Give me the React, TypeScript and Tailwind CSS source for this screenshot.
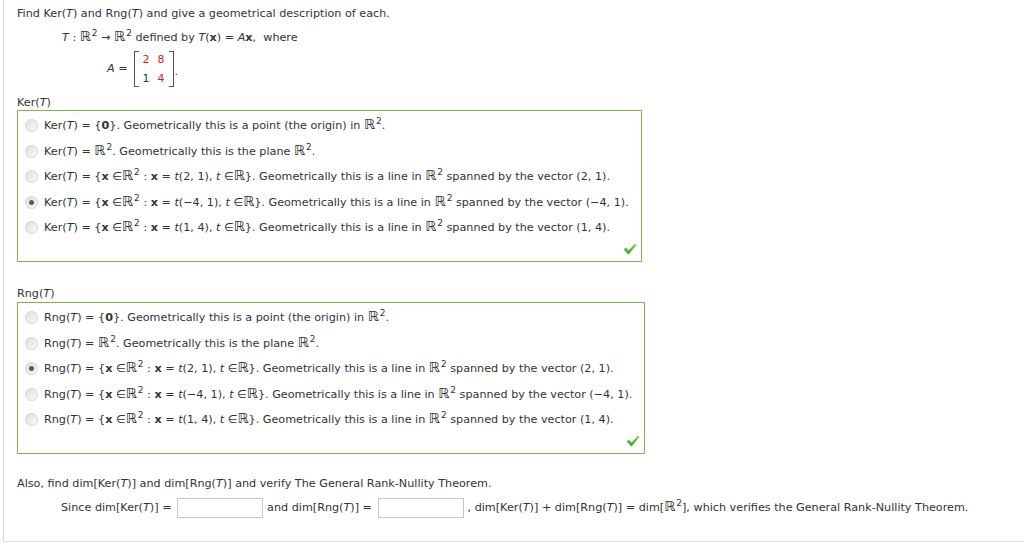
import React from "react";

const R = () => <span className="text-[14px] leading-[0px]">ℝ</span>;
const Sup = ({ c }: { c: string }) => <span className="text-[9px] leading-[0px] relative -top-[5px] ml-[1px]">{c}</span>;
const I = ({ c }: { c: string }) => <i>{c}</i>;

function Radio({ checked }: { checked?: boolean }) {
  return (
    <span className="inline-flex w-[13px] h-[13px] rounded-full border border-[#d4d4d4] bg-gradient-to-br from-[#dedede] to-[#fafafa] items-center justify-center shrink-0">
      {checked && <span className="w-[5px] h-[5px] rounded-full bg-[#5a5a5a]" />}
    </span>
  );
}

function Check() {
  return (
    <svg width="14" height="12" viewBox="0 0 14 12">
      <defs>
        <linearGradient id="g" x1="0" y1="0" x2="0" y2="1">
          <stop offset="0" stopColor="#8fd16a" />
          <stop offset="1" stopColor="#3f9a2b" />
        </linearGradient>
      </defs>
      <path d="M0.5 6.5 L3 4.5 L5.5 7.5 L12 0.5 L13.5 2 L5.5 11.5 Z" fill="url(#g)" />
    </svg>
  );
}

function Row({ checked, children }: { checked?: boolean; children: React.ReactNode }) {
  return (
    <div className="flex items-center h-[25.5px]">
      <Radio checked={checked} />
      <div className="ml-[6px] whitespace-nowrap">{children}</div>
    </div>
  );
}

function Block({ name, sel, width }: { name: string; sel: number; width: string }) {
  const F = (
    <>
      {name}(<I c="T" />)
    </>
  );
  const setLine = (vec: string) => (
    <>
      {F} = {"{"}
      <b>x</b> ∈<R />
      <Sup c="2" /> : <b>x</b> = <I c="t" />({vec}), <I c="t" /> ∈<R />
      {"}"}. Geometrically this is a line in <R />
      <Sup c="2" /> spanned by the vector ({vec}).
    </>
  );
  const rows = [
    <>
      {F} = {"{"}
      <b>0</b>
      {"}"}. Geometrically this is a point (the origin) in <R />
      <Sup c="2" />.
    </>,
    <>
      {F} = <R />
      <Sup c="2" />. Geometrically this is the plane <R />
      <Sup c="2" />.
    </>,
    setLine("2, 1"),
    setLine("−4, 1"),
    setLine("1, 4"),
  ];
  return (
    <div className={`border border-[#7db54f] ${width} pl-[7px] pt-[2px] h-[152px] relative`}>
      {rows.map((r, i) => (
        <Row key={i} checked={i === sel}>
          {r}
        </Row>
      ))}
      <div className="absolute right-[4px] bottom-[6px]">
        <Check />
      </div>
    </div>
  );
}

export default function App() {
  return (
    <div className="w-[1024px] h-[544px] bg-white font-['DejaVu_Sans',Verdana,sans-serif] text-[11.2px] text-[#333] leading-none">
      <div className="ml-[3px] h-[542px] border-l border-b border-[#dcdcdc] pl-[13px] pt-[8px]">
        <div className="h-[11px]">
          Find Ker(<I c="T" />) and Rng(<I c="T" />) and give a geometrical description of each.
        </div>
        <div className="ml-[45px] mt-[13px] h-[11px]">
          <I c="T" /> : <R />
          <Sup c="2" /> → <R />
          <Sup c="2" /> defined by <I c="T" />(<b>x</b>) = <I c="A" />
          <b>x</b>, &nbsp;where
        </div>
        <div className="ml-[90px] mt-[8px] flex items-center h-[36px]">
          <span>
            <I c="A" /> =
          </span>
          <div className="ml-[6px] flex items-stretch h-[36px]">
            <div className="w-[5px] border-l border-t border-b border-[#555]" />
            <div className="grid grid-cols-2 gap-x-[8px] content-between py-[3px] px-[4px] text-[11px]">
              <span className="text-[#e02020]">2</span>
              <span className="text-[#e02020]">8</span>
              <span>1</span>
              <span className="text-[#e02020]">4</span>
            </div>
            <div className="w-[5px] border-r border-t border-b border-[#555]" />
          </div>
          <span className="self-end mb-[10px] ml-[1px]">.</span>
        </div>
        <div className="mt-[10px] h-[11px]">
          Ker(<I c="T" />)
        </div>
        <div className="mt-[2px]">
          <Block name="Ker" sel={3} width="w-[625px]" />
        </div>
        <div className="mt-[26px] h-[11px]">
          Rng(<I c="T" />)
        </div>
        <div className="mt-[3px]">
          <Block name="Rng" sel={2} width="w-[628px]" />
        </div>
        <div className="mt-[24px] h-[11px]">
          Also, find dim[Ker(<I c="T" />)] and dim[Rng(<I c="T" />)] and verify The General Rank-Nullity Theorem.
        </div>
        <div className="ml-[44px] mt-[9px] flex items-center whitespace-nowrap">
          <span>
            Since dim[Ker(<I c="T" />)] =&nbsp;
          </span>
          <span className="inline-block w-[86px] h-[20px] border border-[#c8c8c8] bg-white ml-[2px] mr-[4px]" />
          <span>
            and dim[Rng(<I c="T" />)] =&nbsp;
          </span>
          <span className="inline-block w-[86px] h-[20px] border border-[#c8c8c8] bg-white ml-[2px] mr-[4px]" />
          <span>
            , dim[Ker(<I c="T" />)] + dim[Rng(<I c="T" />)] = dim[<R />
            <Sup c="2" />], which verifies the General Rank-Nullity Theorem.
          </span>
        </div>
      </div>
    </div>
  );
}
